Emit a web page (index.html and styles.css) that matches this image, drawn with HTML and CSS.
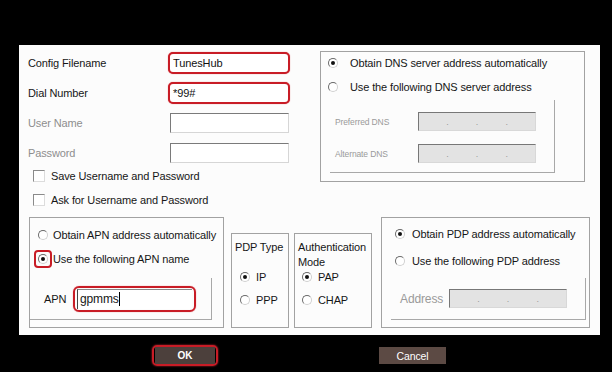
FILE: index.html
```html
<!DOCTYPE html>
<html>
<head>
<meta charset="utf-8">
<link rel="stylesheet" href="styles.css">
</head>
<body>
<div class="dialog">
  <div class="top">
    <div class="form">
      <div class="row"><span class="lbl">Config Filename</span><span class="field hl">TunesHub</span></div>
      <div class="row"><span class="lbl">Dial Number</span><span class="field hl">*99#</span></div>
      <div class="row"><span class="lbl dis">User Name</span><span class="field"></span></div>
      <div class="row"><span class="lbl dis">Password</span><span class="field"></span></div>
      <div class="cbrow first"><span class="check"></span><span>Save Username and Password</span></div>
      <div class="cbrow"><span class="check"></span><span>Ask for Username and Password</span></div>
    </div>
    <div class="group dns">
      <div class="rrow"><span class="radio on"></span><span>Obtain DNS server address automatically</span></div>
      <div class="rrow second"><span class="radio"></span><span>Use the following DNS server address</span></div>
      <div class="inner dnsinner">
        <div class="iprow"><span class="small">Preferred DNS</span><span class="ip"><i>.</i><i>.</i><i>.</i></span></div>
        <div class="iprow second"><span class="small">Alternate DNS</span><span class="ip"><i>.</i><i>.</i><i>.</i></span></div>
      </div>
    </div>
  </div>
  <div class="bottom">
    <div class="group apn">
      <div class="rrow"><span class="radio"></span><span>Obtain APN address automatically</span></div>
      <div class="rrow second"><span class="rhl"><span class="radio on"></span></span><span>Use the following APN name</span></div>
      <div class="inner apninner">
        <span class="apnlbl">APN</span>
        <span class="apnhl"><span class="apnfield">gpmms<b class="caret"></b></span></span>
      </div>
    </div>
    <div class="group small-group pdptype">
      <div class="title">PDP Type</div>
      <div class="rrow"><span class="radio on"></span><span>IP</span></div>
      <div class="rrow second"><span class="radio"></span><span>PPP</span></div>
    </div>
    <div class="group small-group auth">
      <div class="title">Authentication<br>Mode</div>
      <div class="rrow"><span class="radio on"></span><span>PAP</span></div>
      <div class="rrow second"><span class="radio"></span><span>CHAP</span></div>
    </div>
    <div class="group pdp">
      <div class="rrow"><span class="radio on"></span><span>Obtain PDP address automatically</span></div>
      <div class="rrow second"><span class="radio"></span><span>Use the following PDP address</span></div>
      <div class="inner pdpinner">
        <span class="addrlbl">Address</span><span class="ip"><i>.</i><i>.</i><i>.</i></span>
      </div>
    </div>
  </div>
</div>
<div class="footer">
  <span class="okhl"><span class="btn ok">OK</span></span>
  <span class="btn cancel">Cancel</span>
</div>
</body>
</html>
```

FILE: styles.css
```css
html, body {
  margin: 0;
  padding: 0;
}
body {
  width: 612px;
  height: 372px;
  background: #000;
  font-family: "Liberation Sans", Arial, sans-serif;
  font-size: 11px;
  letter-spacing: -0.12px;
  color: #161616;
  overflow: hidden;
}
.dialog {
  margin: 45px 0 0 19px;
  width: 581px;
  height: 290px;
  background: #fcfcfc;
  box-sizing: border-box;
}
.top {
  display: flex;
  height: 172px;
  padding-top: 6px;
  box-sizing: border-box;
}
.form {
  width: 301px;
  padding: 2px 0 0 9px;
  box-sizing: border-box;
}
.row {
  display: flex;
  align-items: center;
  height: 20px;
  margin-bottom: 10px;
}
.lbl {
  width: 142px;
  flex: none;
}
.dis { color: #8e8e8e; }
.field {
  width: 119px;
  height: 20px;
  box-sizing: border-box;
  border: 1px solid;
  border-color: #7a7a7a #d6d6d6 #d6d6d6 #7a7a7a;
  background: #fff;
  display: flex;
  align-items: center;
  padding-left: 2px;
  font-size: 11px;
  color: #111;
}
.field.hl {
  width: 122px;
  height: 22px;
  margin: -1px -1px -1px -2px;
  border: 2px solid #c81c26;
  border-radius: 5px;
  padding-left: 3px;
  box-shadow: 0 0 1px #e05a60;
}
.cbrow {
  display: flex;
  align-items: center;
  height: 14px;
  margin-left: 5px;
  gap: 6px;
}
.cbrow.first {
  margin-top: -4px;
  margin-bottom: 10px;
}
.check {
  width: 12px;
  height: 12px;
  box-sizing: border-box;
  border: 1px solid;
  border-color: #8a8a8a #dcdcdc #dcdcdc #8a8a8a;
  background: #fff;
}
.group {
  border: 1px solid #a2a2a2;
  box-sizing: border-box;
}
.rrow {
  display: flex;
  align-items: center;
  height: 14px;
}
.radio {
  width: 10px;
  height: 10px;
  box-sizing: border-box;
  border-radius: 50%;
  border: 1px solid;
  border-color: #6a6a6a #d0d0d0 #d0d0d0 #6a6a6a;
  background: #fff;
  flex: none;
  display: flex;
  align-items: center;
  justify-content: center;
}
.radio.on::after {
  content: "";
  width: 4px;
  height: 4px;
  border-radius: 50%;
  background: #111;
}
.dns {
  width: 265px;
  height: 131px;
  padding: 4px 0 0 7px;
}
.dns .rrow { gap: 12px; }
.dns .rrow.second { margin-top: 10px; }
.inner {
  border-right: 1px solid #a8a8a8;
  border-bottom: 1px solid #a8a8a8;
  box-sizing: border-box;
}
.dnsinner {
  width: 225px;
  height: 73px;
  margin: 6px 0 0 2px;
  padding: 12px 0 0 5px;
}
.iprow {
  display: flex;
  align-items: center;
  height: 19px;
}
.iprow.second { margin-top: 13px; }
.small {
  width: 83px;
  font-size: 8.5px;
  color: #9a9a9a;
}
.ip {
  width: 118px;
  height: 19px;
  box-sizing: border-box;
  border: 1px solid;
  border-color: #777 #d8d8d8 #d8d8d8 #777;
  background: #e3e3e3;
  display: flex;
  justify-content: space-evenly;
  align-items: center;
  font-size: 9px;
  color: #999;
}
.ip i { font-style: normal; }
.bottom {
  display: flex;
  align-items: flex-start;
  padding-left: 10px;
}
.apn {
  width: 195px;
  height: 111px;
  padding: 10px 0 0 8px;
}
.apn .rrow { gap: 5px; }
.apn .rrow.second { margin-top: 10px; }
.rhl {
  display: flex;
  padding: 2px;
  margin: -4px;
  border: 2px solid #c81c26;
  border-radius: 4px;
}
.apninner {
  width: 182px;
  height: 42px;
  margin: 12px 0 0 -8px;
  display: flex;
  align-items: center;
  padding-left: 14px;
}
.apnlbl {
  width: 29px;
  flex: none;
}
.apnhl {
  width: 123px;
  height: 26px;
  box-sizing: border-box;
  border: 2px solid #c81c26;
  border-radius: 6px;
  padding: 1px 2px;
  display: flex;
  box-shadow: 0 0 1px #e05a60;
}
.apnfield {
  flex: 1;
  border-left: 1px solid #444;
  border-top: 1px solid #888;
  background: #fff;
  display: flex;
  align-items: center;
  padding-left: 2px;
  font-size: 12px;
}
.caret {
  display: inline-block;
  width: 1px;
  height: 14px;
  background: #000;
}
.small-group {
  margin-top: 16px;
  height: 95px;
  padding-top: 6px;
}
.title {
  height: 30px;
  line-height: 15px;
  padding-left: 3px;
}
.small-group .rrow.second { margin-top: 9px; }
.pdptype {
  width: 58px;
  margin-left: 7px;
}
.pdptype .rrow { padding-left: 8px; gap: 6px; }
.auth {
  width: 78px;
  margin-left: 5px;
}
.auth .rrow { padding-left: 7px; gap: 6px; }
.pdp {
  width: 209px;
  height: 111px;
  margin-left: 9px;
  padding: 9px 0 0 13px;
}
.pdp .rrow { gap: 7px; }
.pdp .rrow.second { margin-top: 13px; }
.pdpinner {
  width: 195px;
  height: 42px;
  margin: 10px 0 0 -4px;
  display: flex;
  align-items: center;
  padding-left: 9px;
}
.addrlbl {
  width: 49px;
  font-size: 12px;
  color: #9a9a9a;
}
.footer {
  display: flex;
  align-items: flex-start;
  margin-top: 10px;
  padding-left: 152px;
}
.okhl {
  display: flex;
  justify-content: center;
  align-items: center;
  width: 66px;
  height: 21px;
  box-sizing: border-box;
  border: 2px solid #c81c26;
  border-radius: 5px;
  box-shadow: 0 0 2px #d03038;
}
.btn {
  display: flex;
  justify-content: center;
  align-items: center;
  height: 17px;
  color: #fff;
  font-size: 10px;
  font-weight: bold;
}
.ok {
  width: 60px;
  background: #4c403c;
}
.cancel {
  width: 67px;
  margin: 2px 0 0 161px;
  background: #5c4a44;
  font-weight: normal;
  font-size: 10.5px;
}
```
